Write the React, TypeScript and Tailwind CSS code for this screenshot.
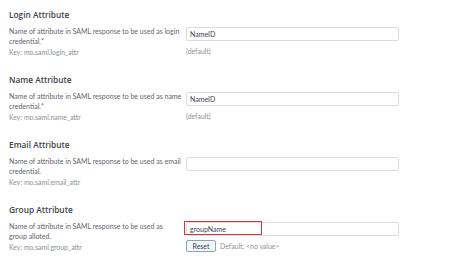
import React from "react";

type Field = {
  title: string;
  desc: string[];
  keyName: string;
  value?: string;
  note?: string;
  group?: boolean;
};

const fields: Field[] = [
  {
    title: "Login Attribute",
    desc: ["Name of attribute in SAML response to be used as login", "credential.*"],
    keyName: "mo.saml.login_attr",
    value: "NameID",
    note: "(default)",
  },
  {
    title: "Name Attribute",
    desc: ["Name of attribute in SAML response to be used as name", "credential.*"],
    keyName: "mo.saml.name_attr",
    value: "NameID",
    note: "(default)",
  },
  {
    title: "Email Attribute",
    desc: ["Name of attribute in SAML response to be used as email", "credential."],
    keyName: "mo.saml.email_attr",
    value: "",
  },
  {
    title: "Group Attribute",
    desc: ["Name of attribute in SAML response to be used as", "group alloted."],
    keyName: "mo.saml.group_attr",
    value: "groupName",
    group: true,
  },
];

function Section({ f }: { f: Field }) {
  return (
    <div className="h-[65px]">
      <div className="h-[10px] text-[8.3px] leading-[10px] font-semibold text-[#3c434a] font-['Open_Sans',sans-serif]">
        {f.title}
      </div>
      <div className="mt-[7px] flex">
        <div className="w-[177px] shrink-0 pr-[2px] overflow-hidden">
          <div className="text-[7px] leading-[9.5px] text-[#5f656b] whitespace-nowrap">
            {f.desc.map((l) => (
              <div key={l}>{l}</div>
            ))}
          </div>
          <div className="mt-[2px] text-[6.9px] leading-[9px] text-[#8c8f94]">Key: {f.keyName}</div>
        </div>
        <div className="w-[213px]">
          <div className="relative h-[14px] border border-[#dcdcde] bg-white rounded-[2px] px-[3px] text-[7px] leading-[12px] text-[#3c434a]">
            {f.value}
            {f.group && (
              <div className="absolute left-[-3px] top-[-2px] w-[78px] h-[14px] border-[1.5px] border-[#d63638]" />
            )}
          </div>
          {f.group ? (
            <div className="mt-[4px] flex items-center gap-[4px]">
              <button className="h-[12px] w-[30px] border border-[#8aa4be] rounded-[2px] bg-[#f6f7f7] text-[6.9px] leading-[10px] text-[#1d3e5e]">
                Reset
              </button>
              <span className="text-[6.9px] leading-[9px] text-[#8c8f94]">Default: &lt;no value&gt;</span>
            </div>
          ) : (
            f.note && <div className="mt-[6px] text-[6.9px] leading-[9px] text-[#8c8f94]">{f.note}</div>
          )}
        </div>
      </div>
    </div>
  );
}

export default function App() {
  return (
    <div
      className="w-[474px] h-[263px] overflow-hidden bg-white pl-[9px] pt-[10px]"
      style={{ fontFamily: 'Lato, "Noto Sans", sans-serif' }}
    >
      {fields.map((f) => (
        <Section key={f.title} f={f} />
      ))}
    </div>
  );
}
